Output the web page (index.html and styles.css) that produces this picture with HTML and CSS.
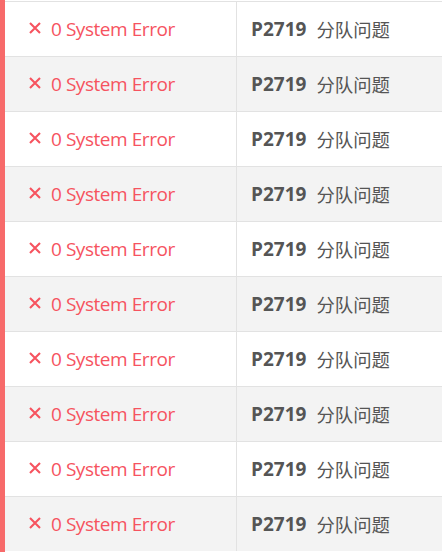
FILE: index.html
```html
<!DOCTYPE html>
<html>
<head>
<meta charset="utf-8">
<link rel="stylesheet" href="styles.css">
</head>
<body>
<div class="list">
  <div class="row"><div class="status"><svg class="x" viewBox="0 0 12 12"><path d="M1 1L11 11M11 1L1 11"/></svg><span>0 System Error</span></div><div class="prob"><b>P2719</b><span class="title">分队问题</span></div></div>
  <div class="row"><div class="status"><svg class="x" viewBox="0 0 12 12"><path d="M1 1L11 11M11 1L1 11"/></svg><span>0 System Error</span></div><div class="prob"><b>P2719</b><span class="title">分队问题</span></div></div>
  <div class="row"><div class="status"><svg class="x" viewBox="0 0 12 12"><path d="M1 1L11 11M11 1L1 11"/></svg><span>0 System Error</span></div><div class="prob"><b>P2719</b><span class="title">分队问题</span></div></div>
  <div class="row"><div class="status"><svg class="x" viewBox="0 0 12 12"><path d="M1 1L11 11M11 1L1 11"/></svg><span>0 System Error</span></div><div class="prob"><b>P2719</b><span class="title">分队问题</span></div></div>
  <div class="row"><div class="status"><svg class="x" viewBox="0 0 12 12"><path d="M1 1L11 11M11 1L1 11"/></svg><span>0 System Error</span></div><div class="prob"><b>P2719</b><span class="title">分队问题</span></div></div>
  <div class="row"><div class="status"><svg class="x" viewBox="0 0 12 12"><path d="M1 1L11 11M11 1L1 11"/></svg><span>0 System Error</span></div><div class="prob"><b>P2719</b><span class="title">分队问题</span></div></div>
  <div class="row"><div class="status"><svg class="x" viewBox="0 0 12 12"><path d="M1 1L11 11M11 1L1 11"/></svg><span>0 System Error</span></div><div class="prob"><b>P2719</b><span class="title">分队问题</span></div></div>
  <div class="row"><div class="status"><svg class="x" viewBox="0 0 12 12"><path d="M1 1L11 11M11 1L1 11"/></svg><span>0 System Error</span></div><div class="prob"><b>P2719</b><span class="title">分队问题</span></div></div>
  <div class="row"><div class="status"><svg class="x" viewBox="0 0 12 12"><path d="M1 1L11 11M11 1L1 11"/></svg><span>0 System Error</span></div><div class="prob"><b>P2719</b><span class="title">分队问题</span></div></div>
  <div class="row"><div class="status"><svg class="x" viewBox="0 0 12 12"><path d="M1 1L11 11M11 1L1 11"/></svg><span>0 System Error</span></div><div class="prob"><b>P2719</b><span class="title">分队问题</span></div></div>
</div>
</body>
</html>
```

FILE: styles.css
```css
html, body {
  margin: 0;
  padding: 0;
  background: #ffffff;
}
body {
  font-family: "Open Sans", "Noto Sans CJK SC", sans-serif;
  font-size: 19px;
}
.list {
  border-left: 5px solid #f76a6a;
  padding-top: 1px;
  height: 551px;
  overflow: hidden;
}
.row {
  display: grid;
  grid-template-columns: 232px 1fr;
  height: 54px;
  border-top: 1px solid #e2e2e2;
  background: #ffffff;
}
.row:nth-child(even) {
  background: #f3f3f3;
}
.status {
  display: flex;
  align-items: center;
  padding-left: 24px;
  padding-bottom: 1px;
  color: #f6535f;
  border-right: 1px solid #e2e2e2;
  white-space: nowrap;
  letter-spacing: -0.45px;
}
.x {
  width: 12px;
  height: 12px;
  margin-right: 10px;
  margin-top: -1px;
  flex: none;
  fill: none;
  stroke: #f6535f;
  stroke-width: 2.1;
}
.prob {
  display: flex;
  align-items: center;
  padding-left: 14px;
  padding-bottom: 1px;
  color: #555555;
  white-space: nowrap;
}
.prob b {
  font-weight: 700;
  margin-right: 10px;
}
.title {
  font-family: "Noto Sans CJK SC", sans-serif;
  font-size: 18.4px;
}
```
